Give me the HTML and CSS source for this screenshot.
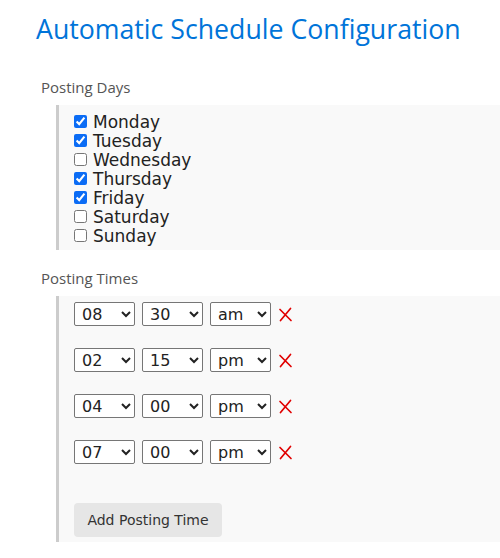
FILE: index.html
```html
<!DOCTYPE html>
<html lang="en">
	<head>
		<meta charset="UTF-8" />
		<meta name="viewport" content="width=device-width, initial-scale=1.0" />
		<title>Automatic Schedule Configuration</title>
		<link rel="stylesheet" href="styles.css">
	</head>
	<body>
		<h1 class="title">Automatic Schedule Configuration</h1>

		<h4 class="section-name">Posting Days</h4>
		<div class="section-box days-box">
			<label class="day"><input type="checkbox" checked /> Monday</label>
			<label class="day"><input type="checkbox" checked /> Tuesday</label>
			<label class="day"><input type="checkbox" /> Wednesday</label>
			<label class="day"><input type="checkbox" checked /> Thursday</label>
			<label class="day"><input type="checkbox" checked /> Friday</label>
			<label class="day"><input type="checkbox" /> Saturday</label>
			<label class="day"><input type="checkbox" /> Sunday</label>
		</div>

		<h4 class="section-name">Posting Times</h4>
		<div class="section-box times-box">
			<div id="times-list"></div>
			<button id="add-time-btn" type="button">Add Posting Time</button>
		</div>

		<script>
			// початкові часи публікацій
			const times = [
				['08', '30', 'am'],
				['02', '15', 'pm'],
				['04', '00', 'pm'],
				['07', '00', 'pm']
			];
			const timesList = document.getElementById('times-list');

			function makeSelect(values, current) {
				const select = document.createElement('select');
				select.className = 'time-select';
				values.forEach((v) => {
					const opt = document.createElement('option');
					opt.textContent = v;
					if (v === current) opt.selected = true;
					select.appendChild(opt);
				});
				return select;
			}

			const hours = [];
			for (let i = 1; i <= 12; i++) hours.push(String(i).padStart(2, '0'));
			const minutes = ['00', '15', '30', '45'];

			function addRow(t) {
				const row = document.createElement('div');
				row.className = 'time-row';
				row.appendChild(makeSelect(hours, t[0]));
				row.appendChild(makeSelect(minutes, t[1]));
				row.appendChild(makeSelect(['am', 'pm'], t[2]));
				const del = document.createElement('span');
				del.className = 'remove-time';
				del.innerHTML = '<svg width="15" height="15" viewBox="0 0 15 15"><path d="M2 2.5 L13 13.5 M12.5 1.5 L2.5 13.5" stroke="#e00000" stroke-width="1.7" stroke-linecap="round"/></svg>';
				del.addEventListener('click', () => row.remove());
				row.appendChild(del);
				timesList.appendChild(row);
			}

			times.forEach(addRow);

			document.getElementById('add-time-btn').addEventListener('click', function () {
				addRow(['12', '00', 'pm']);
			});
		</script>
	</body>
</html>
```

FILE: styles.css
```css
body {
	margin: 0;
	padding: 0 0 0 36px;
	background-color: #fff;
	font-family: "Open Sans", "Noto Sans", Arial, sans-serif;
	overflow: hidden;
}
.title {
	color: #0074d9;
	font-size: 26.7px;
	font-weight: normal;
	margin: 10px 0 30px 0;
	white-space: nowrap;
}
.section-name {
	color: #555;
	font-size: 15px;
	font-weight: normal;
	margin: 0 0 8px 5px;
}
.section-box {
	margin-left: 20px;
	border-left: 3px solid #ccc;
	background-color: #f9f9f9;
	font-family: "DejaVu Sans", Verdana, sans-serif;
}
.days-box {
	padding: 7px 15px 5px 15px;
	margin-bottom: 18px;
}
.day {
	display: flex;
	align-items: center;
	height: 19px;
	font-size: 17px;
	color: #222;
}
.day input {
	width: 13px;
	height: 13px;
	margin: 0 6px 0 0;
	accent-color: #0b6cf5;
}
.times-box {
	padding: 6px 15px 5px 15px;
}
.time-row {
	display: flex;
	align-items: center;
	gap: 7px;
	margin-bottom: 22px;
}
.time-select {
	width: 61px;
	height: 24px;
	font-family: "DejaVu Sans", Verdana, sans-serif;
	font-size: 16px;
	color: #222;
	background-color: #fff;
	border: 1px solid #767676;
	border-radius: 2px;
	padding: 0 0 0 3px;
}
.remove-time {
	display: flex;
	cursor: pointer;
}
#add-time-btn {
	margin-top: 17px;
	width: 148px;
	height: 34px;
	border: none;
	border-radius: 4px;
	background-color: #e6e6e6;
	color: #333;
	font-family: "DejaVu Sans", Verdana, sans-serif;
	font-size: 14px;
}
```
